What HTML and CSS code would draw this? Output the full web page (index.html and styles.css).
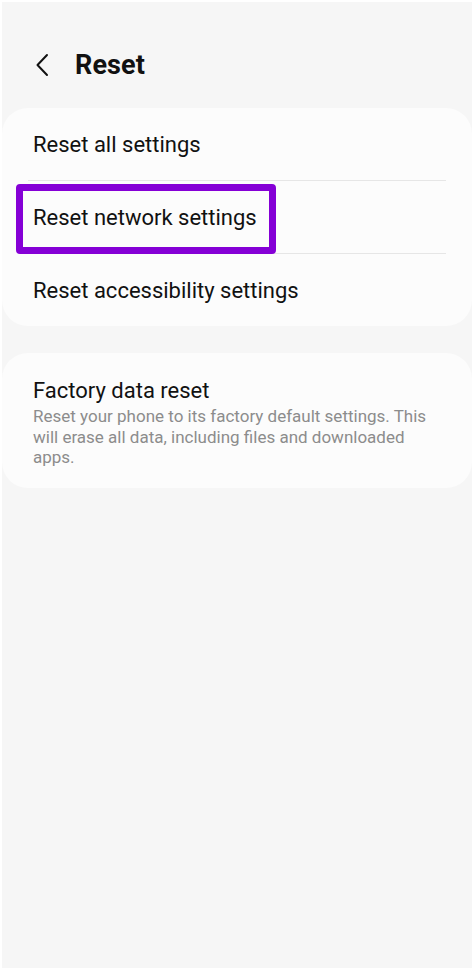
FILE: index.html
```html
<!DOCTYPE html>
<html lang="en">
<head>
<meta charset="utf-8">
<title>Reset</title>
<link rel="stylesheet" href="styles.css">
</head>
<body>
<div class="screen">
  <header class="header">
    <svg class="back" width="14" height="24" viewBox="0 0 14 24" aria-hidden="true">
      <path d="M12 2 L2.5 12 L12 22" fill="none" stroke="#111" stroke-width="2" stroke-linecap="round" stroke-linejoin="round"/>
    </svg>
    <h1 class="title">Reset</h1>
  </header>

  <section class="card">
    <div class="row"><span class="row-label">Reset all settings</span></div>
    <div class="divider"></div>
    <div class="row row-highlighted">
      <span class="row-label">Reset network settings</span>
      <span class="highlight"></span>
    </div>
    <div class="divider"></div>
    <div class="row"><span class="row-label">Reset accessibility settings</span></div>
  </section>

  <section class="card card-factory">
    <div class="row-label">Factory data reset</div>
    <p class="row-desc">Reset your phone to its factory default settings. This will erase all data, including files and downloaded apps.</p>
  </section>
</div>
</body>
</html>
```

FILE: styles.css
```css
html, body {
  margin: 0;
  padding: 0;
  background: #ffffff;
}

body {
  font-family: Roboto, "Noto Sans", "Liberation Sans", sans-serif;
  color: #111111;
}

.screen {
  box-sizing: border-box;
  width: 474px;
  height: 971px;
  margin: 0;
  border-left: 2px solid #ffffff;
  border-right: 2px solid #ffffff;
  border-top: 2px solid #ffffff;
  border-bottom: 3px solid #ffffff;
  background: #f6f6f6;
  display: flex;
  flex-direction: column;
}

.header {
  height: 106px;
  display: flex;
  align-items: center;
  padding-left: 33px;
  padding-top: 20px;
  box-sizing: border-box;
}

.back {
  display: block;
}

.title {
  margin: 0 0 0 26px;
  font-size: 27px;
  font-weight: 700;
  letter-spacing: 0.1px;
  color: #111111;
}

.card {
  background: #fcfcfc;
  border-radius: 26px;
  display: flex;
  flex-direction: column;
}

.row {
  position: relative;
  height: 72px;
  display: flex;
  align-items: center;
  padding-left: 31px;
  padding-top: 1px;
  box-sizing: border-box;
}

.row-label {
  font-size: 22px;
  color: #111111;
  line-height: 26px;
}

.divider {
  height: 1px;
  background: #e6e6e6;
  margin: 0 26px;
}

.highlight {
  position: absolute;
  left: 14px;
  top: 3px;
  width: 260px;
  height: 70px;
  box-sizing: border-box;
  border: 7px solid #8500d6;
  border-radius: 4px;
}

.card-factory {
  margin-top: 27px;
  padding: 25px 31px 20px;
}

.row-desc {
  margin: 2px 0 0;
  font-size: 17px;
  line-height: 20.5px;
  color: #8c8c8c;
}
```
